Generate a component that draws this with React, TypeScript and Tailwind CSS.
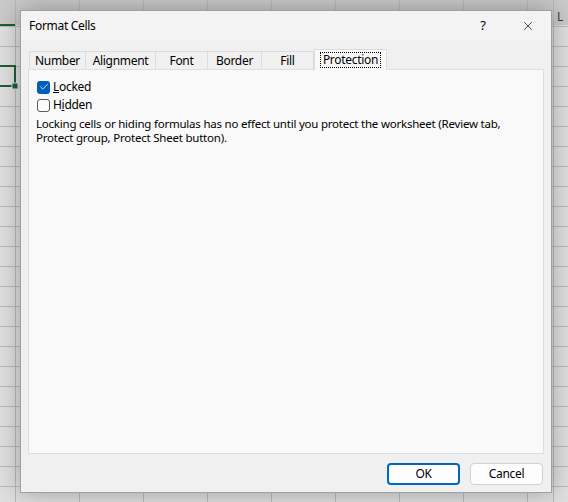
import { Check, X } from "lucide-react";

const tabs = ["Number", "Alignment", "Font", "Border", "Fill"];
const tabWidths = ["w-[57px]", "w-[71px]", "w-[53px]", "w-[55px]", "w-[53px]"];

function SheetGrid() {
  const cols = [15, 79, 143, 207, 271, 335, 399, 463, 527, 553];
  const rows = Array.from({ length: 25 }, (_, i) => 26 + i * 20);
  return (
    <svg className="absolute inset-0" width={568} height={502}>
      <rect x={0} y={0} width={568} height={502} fill="#ffffff" />
      <rect x={0} y={0} width={568} height={25} fill="#e6e6e6" />
      {rows.map((y) => (
        <line key={y} x1={0} x2={568} y1={y + 0.5} y2={y + 0.5} stroke="#d4d4d4" />
      ))}
      {cols.map((x) => (
        <line key={x} x1={x + 0.5} x2={x + 0.5} y1={0} y2={502} stroke="#d4d4d4" />
      ))}
      <line x1={0} x2={15} y1={25} y2={25} stroke="#1e6e42" strokeWidth={2} />
      <path d="M0 66 H15 V86 H0" fill="none" stroke="#1e6e42" strokeWidth={2} />
      <rect x={12} y={83} width={6} height={6} fill="#1e6e42" stroke="#fff" />
      <text x={557} y={21} fontSize={12} fill="#444" fontFamily="Noto Sans, sans-serif">L</text>
    </svg>
  );
}

export default function App() {
  return (
    <div className="relative w-[568px] h-[502px] overflow-hidden font-['Noto_Sans',sans-serif] text-[12px] tracking-[-0.3px] text-black">
      <SheetGrid />
      <div className="absolute inset-0 bg-[rgba(0,0,0,0.12)]" />
      <div className="absolute left-[20px] top-[10px] w-[532px] h-[483px] bg-[#f0f0f0] border border-[#a0a0a0] shadow-[0_0_24px_rgba(0,0,0,0.3)] flex flex-col">
        <div className="h-[30px] bg-[#f3f3f3] flex items-center pl-[8px]">
          <span className="flex-1">Format Cells</span>
          <span className="w-[20px] text-center text-[13px] mr-[28px]">?</span>
          <X className="w-[14px] h-[14px] mr-[16px]" strokeWidth={1.2} />
        </div>
        <div className="flex items-end h-[28px] pl-[8px]">
          {tabs.map((t, i) => (
            <div
              key={t}
              className={`${tabWidths[i]} h-[18px] border border-b-0 border-[#dcdcdc] -ml-px first:ml-0 flex items-center justify-center`}
            >
              {t}
            </div>
          ))}
          <div className="w-[73px] h-[21px] -mb-px bg-[#f9f9f9] border border-b-0 border-[#dcdcdc] relative z-10 flex items-center justify-center">
            <span className="border border-dotted border-black px-[2px] leading-[14px]">Protection</span>
          </div>
        </div>
        <div className="mx-[7px] h-[385px] bg-[#f9f9f9] border border-[#dfdfdf] px-[8px] pt-[10px]">
          <label className="flex items-center gap-[3px] h-[14px]">
            <span className="w-[13px] h-[13px] rounded-[3px] bg-[#005fb8] flex items-center justify-center">
              <Check className="w-[10px] h-[10px] text-white" strokeWidth={2} />
            </span>
            <span><span className="underline">L</span>ocked</span>
          </label>
          <label className="flex items-center gap-[3px] h-[14px] mt-[4px]">
            <span className="w-[13px] h-[13px] rounded-[3px] border border-[#5c5c5c] bg-[#fbfbfb]" />
            <span>H<span className="underline">i</span>dden</span>
          </label>
          <p className="mt-[5px] text-[11.5px] tracking-[-0.22px] leading-[14px] -ml-px whitespace-nowrap">
            Locking cells or hiding formulas has no effect until you protect the worksheet (Review tab,
            <br />
            Protect group, Protect Sheet button).
          </p>
        </div>
        <div className="flex justify-end gap-[10px] pr-[8px] pt-[9px]">
          <button className="w-[73px] h-[22px] rounded-[4px] border-2 border-[#0067c0] bg-[#fdfdfd] flex items-center justify-center">
            OK
          </button>
          <button className="w-[73px] h-[22px] rounded-[4px] border border-[#d0d0d0] bg-[#fdfdfd] flex items-center justify-center">
            Cancel
          </button>
        </div>
      </div>
    </div>
  );
}
